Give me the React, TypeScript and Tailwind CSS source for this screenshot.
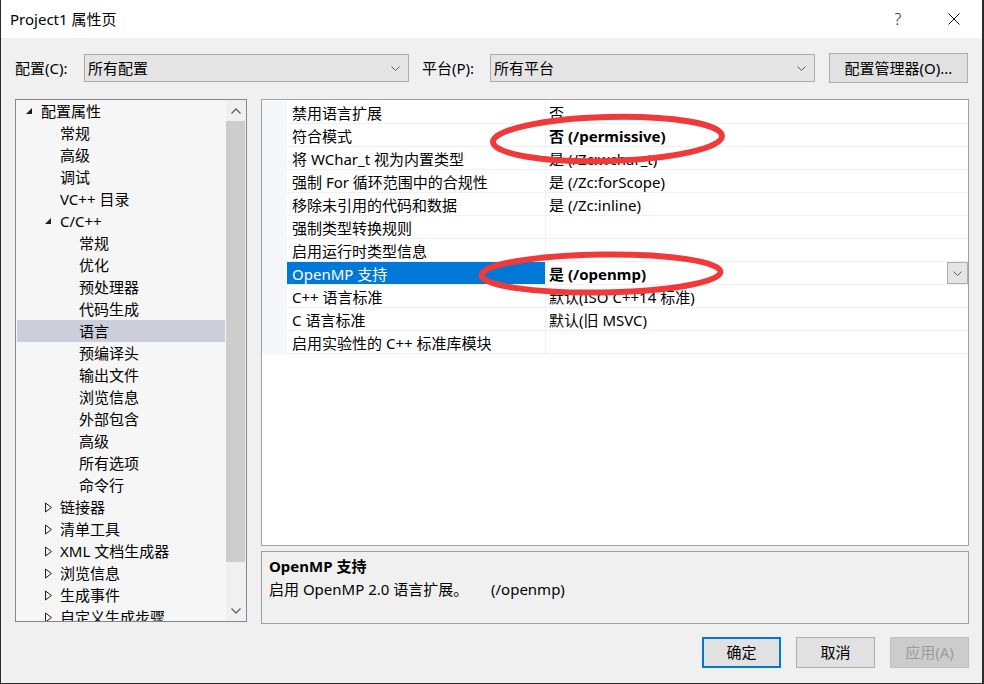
import React from "react";

type TreeItem = { label: string; level: number; arrow?: "open" | "closed"; selected?: boolean };

const treeItems: TreeItem[] = [
  { label: "配置属性", level: 0, arrow: "open" },
  { label: "常规", level: 1 },
  { label: "高级", level: 1 },
  { label: "调试", level: 1 },
  { label: "VC++ 目录", level: 1 },
  { label: "C/C++", level: 1, arrow: "open" },
  { label: "常规", level: 2 },
  { label: "优化", level: 2 },
  { label: "预处理器", level: 2 },
  { label: "代码生成", level: 2 },
  { label: "语言", level: 2, selected: true },
  { label: "预编译头", level: 2 },
  { label: "输出文件", level: 2 },
  { label: "浏览信息", level: 2 },
  { label: "外部包含", level: 2 },
  { label: "高级", level: 2 },
  { label: "所有选项", level: 2 },
  { label: "命令行", level: 2 },
  { label: "链接器", level: 1, arrow: "closed" },
  { label: "清单工具", level: 1, arrow: "closed" },
  { label: "XML 文档生成器", level: 1, arrow: "closed" },
  { label: "浏览信息", level: 1, arrow: "closed" },
  { label: "生成事件", level: 1, arrow: "closed" },
  { label: "自定义生成步骤", level: 1, arrow: "closed" },
];

type Prop = { name: string; value: string; bold?: boolean; selected?: boolean };

const props: Prop[] = [
  { name: "禁用语言扩展", value: "否" },
  { name: "符合模式", value: "否 (/permissive)", bold: true },
  { name: "将 WChar_t 视为内置类型", value: "是 (/Zc:wchar_t)" },
  { name: "强制 For 循环范围中的合规性", value: "是 (/Zc:forScope)" },
  { name: "移除未引用的代码和数据", value: "是 (/Zc:inline)" },
  { name: "强制类型转换规则", value: "" },
  { name: "启用运行时类型信息", value: "" },
  { name: "OpenMP 支持", value: "是 (/openmp)", bold: true, selected: true },
  { name: "C++ 语言标准", value: "默认(ISO C++14 标准)" },
  { name: "C 语言标准", value: "默认(旧 MSVC)" },
  { name: "启用实验性的 C++ 标准库模块", value: "" },
];

const indent = ["pl-[8px]", "pl-[27px]", "pl-[46px]"];

function Chevron({ className = "" }: { className?: string }) {
  return (
    <svg width="9" height="5" viewBox="0 0 9 5" className={className}>
      <polyline points="0.5,0.5 4.5,4.5 8.5,0.5" fill="none" stroke="#5a5a5a" strokeWidth="1" />
    </svg>
  );
}

function Select({ value }: { value: string }) {
  return (
    <div className="w-[325px] h-[28px] bg-[#e5e5e5] border border-[#acacac] flex items-center pl-[3px] pr-[8px]">
      <span className="flex-1">{value}</span>
      <Chevron />
    </div>
  );
}

function TreeArrow({ kind }: { kind?: "open" | "closed" }) {
  if (kind === "open")
    return (
      <svg width="8" height="8" viewBox="0 0 8 8">
        <polygon points="7,1 7,7 1,7" fill="#1e1e1e" />
      </svg>
    );
  if (kind === "closed")
    return (
      <svg width="9" height="11" viewBox="0 0 9 11">
        <polygon points="1.5,1 7.5,5.5 1.5,10" fill="none" stroke="#1e1e1e" strokeWidth="1" />
      </svg>
    );
  return null;
}

export default function App() {
  return (
    <div className="relative w-[984px] h-[684px] overflow-hidden bg-[#f0f0f0] border-l border-b border-r-2 border-[#2b2b2b] text-[15px] text-black font-['Noto_Sans','Noto_Sans_CJK_SC',sans-serif]">
      {/* Title bar */}
      <div className="h-[38px] bg-white flex items-center pl-[9px]">
        <span className="flex-1 leading-none">Project1 属性页</span>
        <div className="w-[56px] flex justify-center text-[16px] font-light text-[#222]">?</div>
        <div className="w-[56px] flex justify-center">
          <svg width="12" height="12" viewBox="0 0 12 12">
            <path d="M0.5 0.5 L11.5 11.5 M11.5 0.5 L0.5 11.5" stroke="#111" strokeWidth="1" fill="none" />
          </svg>
        </div>
      </div>

      {/* Config row */}
      <div className="mt-[15px] pl-[14px] h-[30px] flex items-center">
        <div className="w-[69px]">配置(C):</div>
        <Select value="所有配置" />
        <div className="w-[81px] pl-[13px]">平台(P):</div>
        <Select value="所有平台" />
        <div className="ml-[14px] w-[139px] h-[30px] bg-[#e1e1e1] border border-[#adadad] flex items-center justify-center">
          配置管理器(O)...
        </div>
      </div>

      {/* Main */}
      <div className="mt-[16px] pl-[14px] flex">
        {/* Tree */}
        <div className="w-[232px] h-[523px] border border-[#828790] bg-[#f6f6f6] flex">
          <div className="flex-1 overflow-hidden px-[1px]">
            {treeItems.map((it, i) => (
              <div
                key={i}
                className={`h-[22px] flex items-center ${indent[it.level]} ${it.selected ? "bg-[#cccedb]" : ""}`}
              >
                <div className="w-[16px] flex items-center">
                  <TreeArrow kind={it.arrow} />
                </div>
                <span className="whitespace-nowrap">{it.label}</span>
              </div>
            ))}
          </div>
          <div className="w-[20px] bg-[#f0f0f0] flex flex-col">
            <div className="h-[21px] flex items-center justify-center">
              <svg width="10" height="6" viewBox="0 0 10 6">
                <polyline points="0.5,5.5 5,1 9.5,5.5" fill="none" stroke="#606060" strokeWidth="1.3" />
              </svg>
            </div>
            <div className="h-[441px] bg-[#cdcdcd] mr-[1px]" />
            <div className="flex-1" />
            <div className="h-[21px] flex items-center justify-center">
              <svg width="10" height="6" viewBox="0 0 10 6">
                <polyline points="0.5,0.5 5,5 9.5,0.5" fill="none" stroke="#606060" strokeWidth="1.3" />
              </svg>
            </div>
          </div>
        </div>

        {/* Right column */}
        <div className="ml-[14px] w-[708px] flex flex-col">
          <div className="h-[447px] border border-[#a0a0a0] bg-white pt-[1px]">
            {props.map((p, i) => (
              <div key={i} className="h-[23px] flex">
                <div className="w-[25px] bg-[#f4f6fa]" />
                <div
                  className={`w-[258px] flex items-center pl-[5px] pt-[2px] border-b border-[#eef0f5] whitespace-nowrap ${
                    p.selected ? "bg-[#0078d7] text-white" : ""
                  }`}
                >
                  {p.name}
                </div>
                <div className="flex-1 flex items-center border-l border-b border-[#eef0f5] pl-[3px] whitespace-nowrap">
                  <span className={`flex-1 pt-[2px] ${p.bold ? "font-bold" : ""}`}>{p.value}</span>
                  {p.selected && (
                    <div className="w-[21px] h-[22px] bg-[#e5e5e5] border border-[#adadad] flex items-center justify-center self-start">
                      <Chevron />
                    </div>
                  )}
                </div>
              </div>
            ))}
          </div>
          <div className="mt-[5px] h-[73px] border border-[#a0a0a0] bg-[#f0f0f0] pl-[7px] pt-[3px]">
            <div className="leading-[23px] font-bold">OpenMP 支持</div>
            <div className="leading-[23px] whitespace-nowrap">
              <span className="inline-block w-[222px]">启用 OpenMP 2.0 语言扩展。</span>
              <span>(/openmp)</span>
            </div>
          </div>
        </div>
      </div>

      {/* Buttons */}
      <div className="mt-[13px] pr-[13px] flex justify-end gap-[15px]">
        <div className="w-[79px] h-[31px] bg-[#e1e1e1] border-2 border-[#0078d7] flex items-center justify-center">确定</div>
        <div className="w-[79px] h-[31px] bg-[#e1e1e1] border border-[#adadad] flex items-center justify-center">取消</div>
        <div className="w-[79px] h-[31px] bg-[#cccccc] border border-[#bfbfbf] text-[#9a9a9a] flex items-center justify-center">应用(A)</div>
      </div>

      {/* Red annotation ellipses */}
      <svg className="absolute left-[-1px] top-0 pointer-events-none" width="984" height="684" viewBox="0 0 984 684">
        <ellipse cx="607.5" cy="139" rx="114.5" ry="22" transform="rotate(-1.5 607.5 139)" fill="none" stroke="#f03a3a" strokeWidth="6" />
        <ellipse cx="601" cy="273.5" rx="119.5" ry="19" transform="rotate(-0.8 601 273.5)" fill="none" stroke="#f03a3a" strokeWidth="6" />
      </svg>
    </div>
  );
}
